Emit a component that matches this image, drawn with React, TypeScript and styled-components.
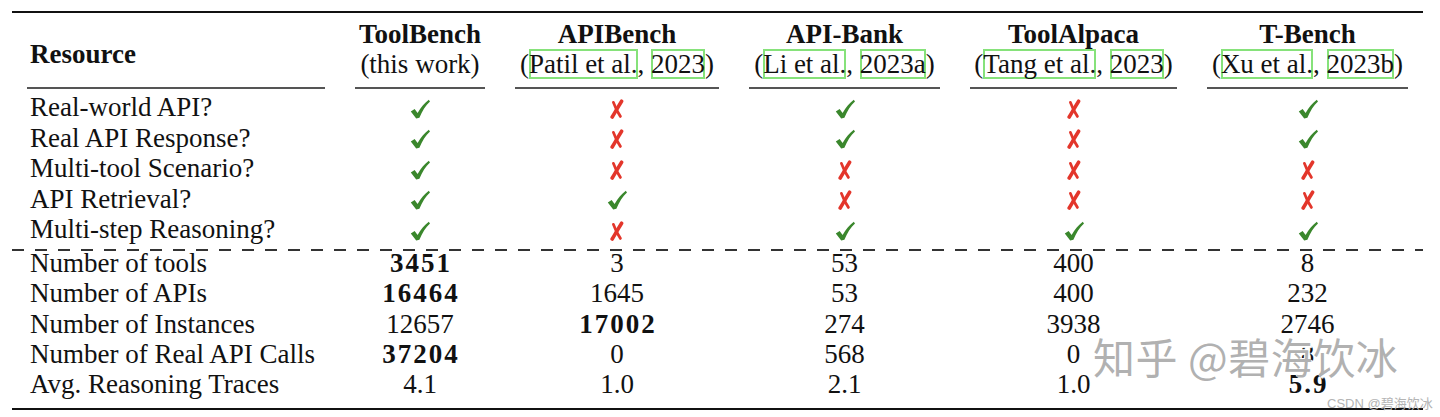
import React from "react";
import styled, { createGlobalStyle } from "styled-components";

const GlobalStyle = createGlobalStyle`
  html, body {
    margin: 0;
    padding: 0;
    background: #ffffff;
  }
  body {
    font-family: "Liberation Serif", "Times New Roman", serif;
    color: #111111;
  }
`;

// page + table frame
const Page = styled.div`
  position: relative;
  width: 1440px;
  height: 417px;
  overflow: hidden;
  background: #ffffff;
`;

const Table = styled.div`
  position: relative;
  top: 11px;
  margin-left: 12px;
  width: 1411px;
  border-top: 2px solid #111111;
  border-bottom: 2px solid #111111;
  padding-bottom: 9px;
`;

const Grid = styled.div<{ $top?: number }>`
  display: grid;
  grid-template-columns: 298px 130px 204px 191px 207px 201px;
  column-gap: 30px;
  padding: ${(props) => props.$top ?? 0}px 15px 0;
`;

// header
const HeadCell = styled.div<{ $label?: boolean }>`
  display: flex;
  flex-direction: column;
  align-items: ${(props) => (props.$label ? "flex-start" : "center")};
  justify-content: center;
  padding: ${(props) => (props.$label ? "12px 0 4px 3px" : "6px 0 8px")};
  border-bottom: 2px solid #555555;
  font-size: 27px;
  line-height: 30px;
  white-space: nowrap;
`;

const HeadTitle = styled.span`
  font-weight: 700;
`;

const HeadSub = styled.span`
  font-weight: 400;
`;

const Cite = styled.span`
  box-shadow: inset 0 0 0 2px #86e27a;
`;

// body rows
const Cell = styled.div<{ $label?: boolean; $bold?: boolean; $lh: number }>`
  display: flex;
  align-items: center;
  justify-content: ${(props) => (props.$label ? "flex-start" : "center")};
  padding-left: ${(props) => (props.$label ? "3px" : "0")};
  height: ${(props) => props.$lh}px;
  font-size: 27px;
  line-height: ${(props) => props.$lh}px;
  font-weight: ${(props) => (props.$bold ? 700 : 400)};
  letter-spacing: ${(props) => (props.$bold ? "2px" : "0")};
  text-indent: ${(props) => (props.$bold ? "2px" : "0")};
  white-space: nowrap;
`;

const Dashed = styled.div`
  height: 2px;
  margin: 4.5px 0 -3px;
  background: repeating-linear-gradient(
    to right,
    #333333 0,
    #333333 12px,
    transparent 12px,
    transparent 23px
  );
`;

const MarkBox = styled.span`
  display: inline-flex;
  width: 20px;
  height: 20px;
  margin-top: 3px;
`;

// watermarks
const Watermark = styled.div`
  position: absolute;
  left: 1093px;
  top: 335px;
  font-family: "Noto Sans CJK SC", "Noto Sans", sans-serif;
  font-size: 42px;
  line-height: 42px;
  font-weight: 400;
  letter-spacing: 0.5px;
  color: rgba(160, 160, 160, 0.82);
  text-shadow: 1px 1px 0 #ffffff, -1px -1px 0 #ffffff, 2px 2px 1px #ffffff;
  white-space: nowrap;
  pointer-events: none;
`;

const Credit = styled.div`
  position: absolute;
  left: 1327px;
  top: 396px;
  font-family: "Liberation Sans", "Noto Sans CJK SC", sans-serif;
  font-size: 13px;
  line-height: 15px;
  color: #b4b4b4;
  white-space: nowrap;
`;

const Check = () => (
  <MarkBox>
    <svg width="20" height="20" viewBox="0 0 20 20">
      <path
        d="M0.8 12.4 L4.6 10 L7.6 14 C10.8 8.4 14.4 4.2 18.8 0.8 L20 2.4 C15.6 6.6 12.2 11.6 9.4 18.8 L6.2 19.6 Z"
        fill="#3a872c"
      />
    </svg>
  </MarkBox>
);

const Cross = () => (
  <MarkBox>
    <svg width="20" height="20" viewBox="0 0 20 20">
      <path
        d="M14.6 2.2 C11.6 7 8.4 12.6 5.2 18"
        stroke="#e3362b"
        strokeWidth="3.6"
        strokeLinecap="round"
        fill="none"
      />
      <path
        d="M6.4 3.4 C8.2 8.4 10.6 13.4 13.4 17.4"
        stroke="#e3362b"
        strokeWidth="2.8"
        strokeLinecap="round"
        fill="none"
      />
    </svg>
  </MarkBox>
);

type Head = { title: string; sub?: React.ReactNode };

const heads: Head[] = [
  { title: "ToolBench", sub: "(this work)" },
  {
    title: "APIBench",
    sub: (
      <>
        (<Cite>Patil et al.</Cite>, <Cite>2023</Cite>)
      </>
    ),
  },
  {
    title: "API-Bank",
    sub: (
      <>
        (<Cite>Li et al.</Cite>, <Cite>2023a</Cite>)
      </>
    ),
  },
  {
    title: "ToolAlpaca",
    sub: (
      <>
        (<Cite>Tang et al.</Cite>, <Cite>2023</Cite>)
      </>
    ),
  },
  {
    title: "T-Bench",
    sub: (
      <>
        (<Cite>Xu et al.</Cite>, <Cite>2023b</Cite>)
      </>
    ),
  },
];

const features: [string, boolean[]][] = [
  ["Real-world API?", [true, false, true, false, true]],
  ["Real API Response?", [true, false, true, false, true]],
  ["Multi-tool Scenario?", [true, false, false, false, false]],
  ["API Retrieval?", [true, true, false, false, false]],
  ["Multi-step Reasoning?", [true, false, true, true, true]],
];

// "*" marks a bold value
const stats: [string, string[]][] = [
  ["Number of tools", ["*3451", "3", "53", "400", "8"]],
  ["Number of APIs", ["*16464", "1645", "53", "400", "232"]],
  ["Number of Instances", ["12657", "*17002", "274", "3938", "2746"]],
  ["Number of Real API Calls", ["*37204", "0", "568", "0", "8"]],
  ["Avg. Reasoning Traces", ["4.1", "1.0", "2.1", "1.0", "*5.9"]],
];

const App: React.FC = () => {
  return (
    <Page>
      <GlobalStyle />
      <Table>
        <Grid>
          <HeadCell $label>
            <HeadTitle>Resource</HeadTitle>
          </HeadCell>
          {heads.map((h) => (
            <HeadCell key={h.title}>
              <HeadTitle>{h.title}</HeadTitle>
              <HeadSub>{h.sub}</HeadSub>
            </HeadCell>
          ))}
        </Grid>

        <Grid $top={3}>
          {features.map(([label, marks]) => (
            <React.Fragment key={label}>
              <Cell $label $lh={30.5}>
                {label}
              </Cell>
              {marks.map((ok, i) => (
                <Cell key={i} $lh={30.5}>
                  {ok ? <Check /> : <Cross />}
                </Cell>
              ))}
            </React.Fragment>
          ))}
        </Grid>

        <Dashed />

        <Grid>
          {stats.map(([label, values]) => (
            <React.Fragment key={label}>
              <Cell $label $lh={30.3}>
                {label}
              </Cell>
              {values.map((v, i) => (
                <Cell key={i} $lh={30.3} $bold={v.startsWith("*")}>
                  {v.replace("*", "")}
                </Cell>
              ))}
            </React.Fragment>
          ))}
        </Grid>
      </Table>

      <Watermark>知乎 @碧海饮冰</Watermark>
      <Credit>CSDN @碧海饮冰</Credit>
    </Page>
  );
};

export default App;
